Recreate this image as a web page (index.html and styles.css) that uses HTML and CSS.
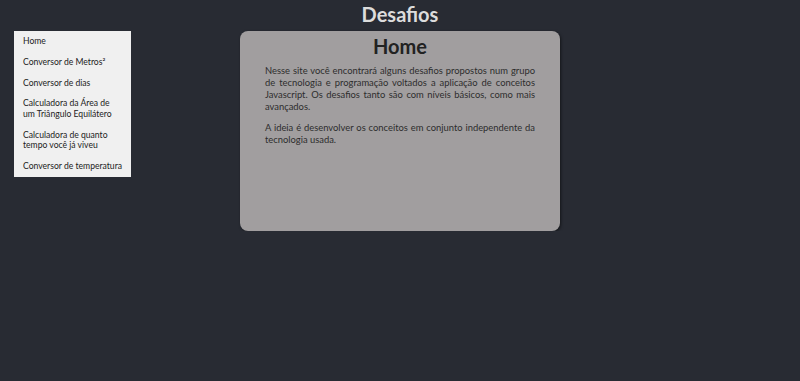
FILE: index.html
```html
<!DOCTYPE html>
<html lang="pt-BR">
<head>
    <meta charset="UTF-8">
    <meta name="viewport" content="width=device-width, initial-scale=1.0">
    <title>Desafios</title>
    <link rel="stylesheet" href="styles.css">
</head>
<body>
    <h1 class="site-title">Desafios</h1>
    <div class="layout">
        <nav class="menu">
            <a href="#" class="menu-item">Home</a>
            <a href="#" class="menu-item">Conversor de Metros&sup2;</a>
            <a href="#" class="menu-item">Conversor de dias</a>
            <a href="#" class="menu-item">Calculadora da Área de um Triângulo Equilátero</a>
            <a href="#" class="menu-item">Calculadora de quanto tempo você já viveu</a>
            <a href="#" class="menu-item">Conversor de temperatura</a>
        </nav>
        <main class="card">
            <h2 class="card-title">Home</h2>
            <p>Nesse site você encontrará alguns desafios propostos num grupo de tecnologia e programação voltados a aplicação de conceitos Javascript. Os desafios tanto são com níveis básicos, como mais avançados.</p>
            <p>A ideia é desenvolver os conceitos em conjunto independente da tecnologia usada.</p>
        </main>
    </div>
</body>
</html>
```

FILE: styles.css
```css
body {
    margin: 0;
    background-color: #282b33;
    font-family: Lato, "Noto Sans", sans-serif;
}
.site-title {
    margin: 0;
    padding-top: 1px;
    height: 30px;
    text-align: center;
    color: #dcdcdc;
    font-size: 20px;
    line-height: 26px;
    font-weight: bold;
}
.layout {
    display: grid;
    grid-template-columns: 1fr 320px 1fr;
    align-items: start;
    padding: 0 14px;
}
.menu {
    justify-self: start;
    width: 117px;
    background-color: #f0f0f0;
    display: flex;
    flex-direction: column;
}
.menu-item {
    color: #222;
    text-decoration: none;
    font-size: 8.6px;
    line-height: 10.6px;
    padding: 5px 8px 5.2px 9px;
}
.menu-item sup {
    font-size: 6px;
}
.card {
    grid-column: 2;
    box-sizing: border-box;
    height: 200px;
    background-color: #a19e9f;
    border-radius: 8px;
    box-shadow: 1px 1px 3px rgba(0, 0, 0, 0.5);
    padding: 2px 25px;
    color: #2d2d2d;
    font-size: 9.4px;
    line-height: 12px;
}
.card-title {
    margin: 0 0 6px;
    text-align: center;
    font-size: 20px;
    line-height: 26px;
    color: #222;
}
.card p {
    margin: 0 0 9px;
    text-align: justify;
}
```
